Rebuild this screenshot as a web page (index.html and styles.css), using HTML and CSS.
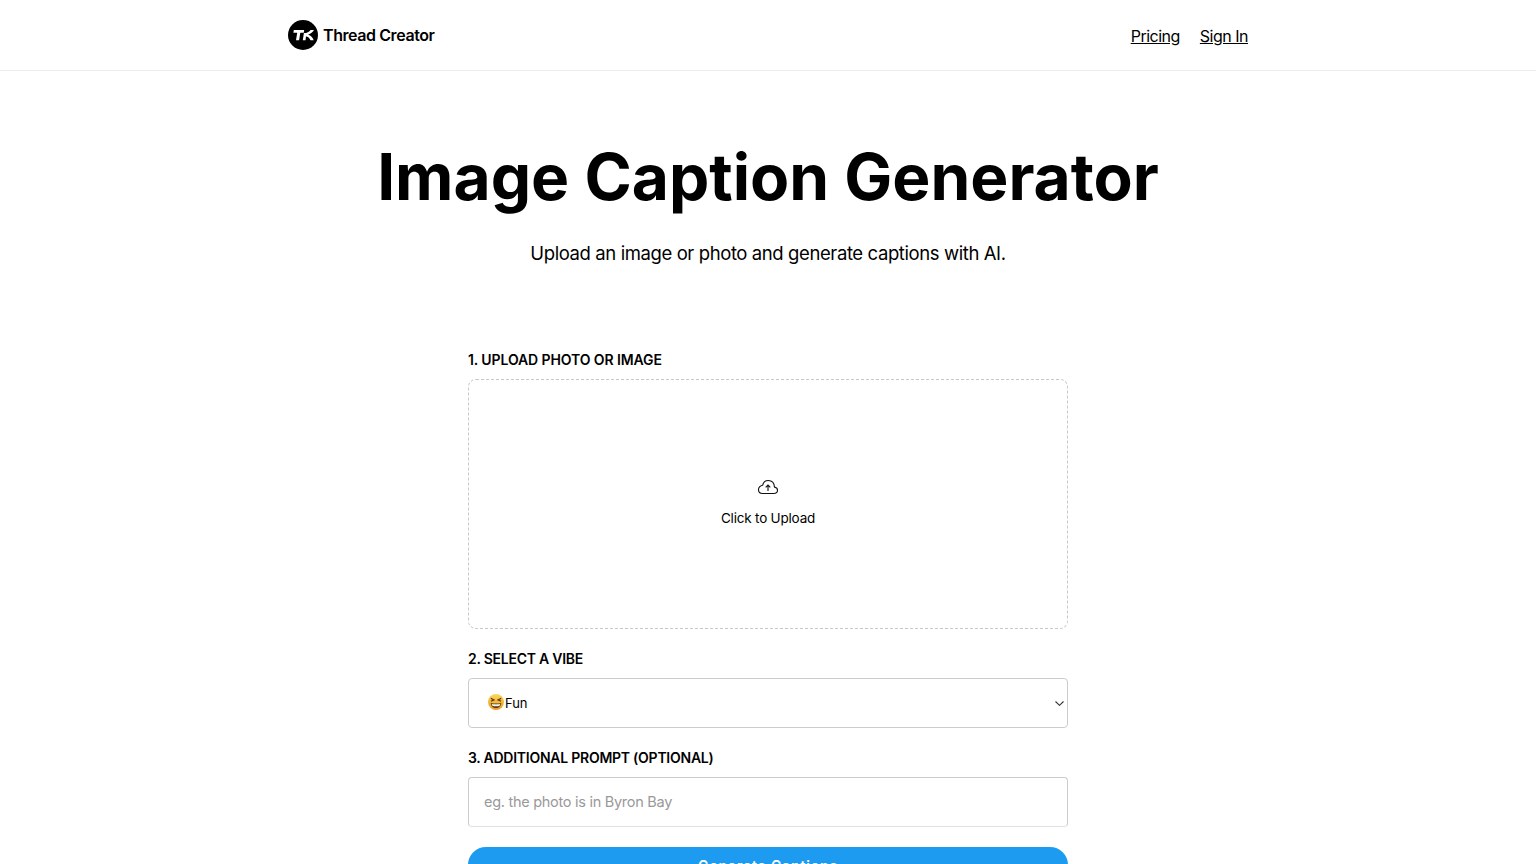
FILE: index.html
```html
<!DOCTYPE html>
<html lang="en">
<head>
<meta charset="utf-8">
<title>Image Caption Generator</title>
<link rel="stylesheet" href="styles.css">
</head>
<body>
<header class="site-header">
  <div class="header-inner">
    <a class="brand" href="#">
      <svg class="brand-logo" viewBox="0 0 30 30" aria-hidden="true">
        <circle cx="15" cy="15" r="15" fill="#000"/>
        <path d="M5.800 10h10.400l-.5 2.700h-3.400l-1.200 7.600H8l1.200-7.600H5.400z" fill="#fff"/>
        <path d="M26 10c-1.300 2.300-3.200 3.800-5.700 4.400v.4c2.500.7 4.400 2.600 5.400 5.500h-3.200c-1-2.200-2.600-3.500-4.500-3.700l-.5 3.700h-2.700l1.100-7.200c3.200 0 5.400-1 6.700-3.100z" fill="#fff"/>
      </svg>
      <span class="brand-name">Thread Creator</span>
    </a>
    <nav class="nav">
      <a href="#">Pricing</a>
      <a href="#">Sign In</a>
    </nav>
  </div>
</header>
<main class="main">
  <h1 class="title">Image Caption Generator</h1>
  <p class="subtitle">Upload an image or photo and generate captions with AI.</p>
  <form class="form">
    <label class="label label-first">1. UPLOAD PHOTO OR IMAGE</label>
    <div class="upload">
      <svg class="upload-icon" viewBox="0 0 22 16" aria-hidden="true">
        <path d="M5.500 14.500h11.200c2.200 0 3.800-1.400 3.800-3.200 0-1.700-1.200-3-3-3.200C17.200 4 14.700 1.500 11.300 1.500 8.300 1.500 6.200 3.500 5.700 6.200 3.300 6.700 1.500 8.600 1.500 10.800c0 2.100 1.700 3.700 4 3.700z" fill="none" stroke="#111" stroke-width="1.100" stroke-linejoin="round"/>
        <path d="M11 12V6.300M8.700 8.400 11 6.100l2.300 2.300" fill="none" stroke="#111" stroke-width="1.100"/>
      </svg>
      <span class="upload-text">Click to Upload</span>
    </div>
    <label class="label">2. SELECT A VIBE</label>
    <div class="select-wrap">
      <svg class="emoji" viewBox="0 0 16 16" aria-hidden="true">
        <defs>
          <linearGradient id="face" x1="0" y1="0" x2="0" y2="1">
            <stop offset="0" stop-color="#fbd75a"/>
            <stop offset="1" stop-color="#ee9a22"/>
          </linearGradient>
        </defs>
        <circle cx="8" cy="8" r="8" fill="url(#face)"/>
        <path d="M2.800 4.300 6 5.900 2.900 7.300M13.200 4.300 10 5.900l3.100 1.400" fill="none" stroke="#5a3b10" stroke-width="1.200"/>
        <path d="M2.700 9c3.500.7 7.100.7 10.600 0-.2 3-2.400 5-5.300 5S2.900 12 2.700 9z" fill="#5a3b10"/>
        <path d="M3.700 9.900c2.900.4 5.700.4 8.600 0-.2 1-.5 1.500-1 2-2.200.4-4.400.4-6.600 0-.5-.5-.8-1-1-2z" fill="#f4f1ea"/>
      </svg>
      <select class="select">
        <option>Fun</option>
      </select>
      <svg class="chevron" viewBox="0 0 9 5" aria-hidden="true">
        <path d="M.5.500 4.500 4.300 8.500.5" fill="none" stroke="#333" stroke-width="1.100"/>
      </svg>
    </div>
    <label class="label">3. ADDITIONAL PROMPT (OPTIONAL)</label>
    <input class="input" type="text" placeholder="eg. the photo is in Byron Bay">
    <button class="submit" type="button">Generate Captions</button>
  </form>
</main>
</body>
</html>
```

FILE: styles.css
```css
* {
  box-sizing: border-box;
}

html,
body {
  height: 100%;
  margin: 0;
  overflow: hidden;
}

body {
  background: #fff;
  color: #000;
  font-family: "Inter", "Liberation Sans", sans-serif;
}

.site-header {
  height: 71px;
  border-bottom: 1px solid #ececec;
}

.header-inner {
  width: 960px;
  height: 70px;
  margin: 0 auto;
  display: flex;
  align-items: center;
  justify-content: space-between;
}

.brand {
  display: flex;
  align-items: center;
  gap: 5px;
  color: #000;
  text-decoration: none;
}

.brand-logo {
  width: 30px;
  height: 30px;
}

.brand-name {
  font-size: 16px;
  font-weight: 600;
  letter-spacing: -0.42px;
}

.nav {
  display: flex;
  gap: 20px;
  padding-top: 1px;
}

.nav a {
  color: #000;
  font-size: 16px;
  letter-spacing: -0.5px;
}

.main {
  width: 600px;
  margin: 0 auto;
  display: flex;
  flex-direction: column;
  align-items: center;
}

.title {
  margin: 68px 0 0;
  font-size: 64px;
  line-height: 76px;
  font-weight: 700;
  letter-spacing: 0;
  white-space: nowrap;
}

.subtitle {
  margin: 24px 0 0;
  font-size: 18.500px;
  line-height: 28px;
  letter-spacing: -0.4px;
  white-space: nowrap;
}

.form {
  width: 600px;
  display: flex;
  flex-direction: column;
}

.label {
  display: block;
  margin: 21px 0 10px;
  font-size: 14px;
  line-height: 18px;
  font-weight: 600;
  letter-spacing: -0.25px;
}

.label-first {
  margin-top: 84px;
  letter-spacing: -0.1px;
}

.upload {
  height: 250px;
  padding-bottom: 2px;
  border: 1px dashed #c8c8c8;
  border-radius: 8px;
  display: flex;
  flex-direction: column;
  align-items: center;
  justify-content: center;
  gap: 13px;
}

.upload-icon {
  width: 22px;
  height: 16px;
}

.upload-text {
  font-size: 13.500px;
  line-height: 20px;
  letter-spacing: -0.2px;
}

.select-wrap {
  position: relative;
  height: 50px;
}

.select {
  width: 100%;
  height: 50px;
  padding: 0 0 0 36px;
  border: 1px solid #ccc;
  border-radius: 4px;
  background: #fff;
  color: #000;
  font-family: inherit;
  font-size: 13px;
  letter-spacing: -0.1px;
  appearance: none;
}

.emoji {
  position: absolute;
  left: 20px;
  top: 16px;
  width: 16px;
  height: 16px;
  pointer-events: none;
}

.chevron {
  position: absolute;
  right: 4px;
  top: 23px;
  width: 9px;
  height: 5px;
  pointer-events: none;
}

.input {
  height: 50px;
  padding: 0 15px 1px;
  border: 1px solid #ccc;
  border-bottom-color: #e0e0e0;
  border-radius: 4px;
  font-family: inherit;
  font-size: 14.500px;
  letter-spacing: -0.28px;
}

.input::placeholder {
  color: #999;
  opacity: 1;
}

.submit {
  height: 36px;
  margin-top: 20px;
  border: 0;
  border-radius: 18px;
  background: #1d9bf0;
  color: #fff;
  font-family: inherit;
  font-size: 14px;
  font-weight: 600;
  letter-spacing: 0.8px;
  flex: none;
}
```
